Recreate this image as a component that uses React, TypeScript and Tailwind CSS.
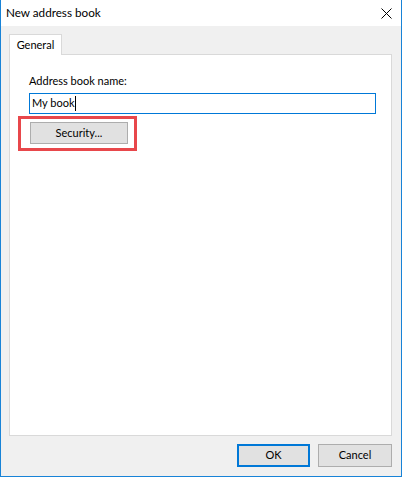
import React from "react";

// Small "New address book" dialog with a single General tab
const CloseIcon = () => (
  <svg width="11" height="11" viewBox="0 0 11 11" className="block">
    <path d="M0.5 0.5 L10.5 10.5 M10.5 0.5 L0.5 10.5" stroke="#000" strokeWidth="1" fill="none" />
  </svg>
);

const App: React.FC = () => {
  return (
    <div
      className="w-[402px] h-[477px] flex flex-col bg-[#f0f0f0] border-x border-b border-[#1883d7] text-[11px] text-black"
      style={{ fontFamily: 'Lato, "Noto Sans", sans-serif' }}
    >
      {/* title bar */}
      <div className="h-[26px] bg-white flex items-center justify-between pl-[5px] pr-[9px]">
        <span className="leading-none text-[11.7px]">New address book</span>
        <CloseIcon />
      </div>

      <div className="flex-1 flex flex-col pl-[8px] pr-[9px] pt-[8px]">
        {/* tab strip */}
        <div className="flex">
          <div className="relative z-10 -mb-px w-[53px] h-[21px] bg-white border-x border-t border-[#d9d9d9] flex items-center justify-center">
            General
          </div>
        </div>

        {/* tab page */}
        <div className="flex-1 bg-white border border-[#d9d9d9] flex flex-col pl-[19px] pr-[15px] pt-[17px]">
          <label className="leading-[18px]">Address book name:</label>
          <div className="mt-[3px] h-[21px] border border-[#0078d7] flex items-center pl-[2px]">
            <span>My book</span>
            <span className="w-px h-[15px] bg-black" />
          </div>
          <div className="mt-[2px] -ml-[11px] w-[119px] h-[35px] border-[3px] border-[#e8474b] pl-[9px] pt-[3px]">
            <button className="w-[98px] h-[22px] bg-[#e1e1e1] border border-[#adadad] flex items-center justify-center">
              Security...
            </button>
          </div>
        </div>

        {/* dialog buttons */}
        <div className="flex justify-end gap-[8px] pt-[8px] pb-[9px]">
          <button className="w-[73px] h-[23px] bg-[#e1e1e1] border-2 border-[#0078d7] flex items-center justify-center">
            OK
          </button>
          <button className="w-[74px] h-[23px] bg-[#e1e1e1] border border-[#adadad] flex items-center justify-center">
            Cancel
          </button>
        </div>
      </div>
    </div>
  );
};

export default App;
